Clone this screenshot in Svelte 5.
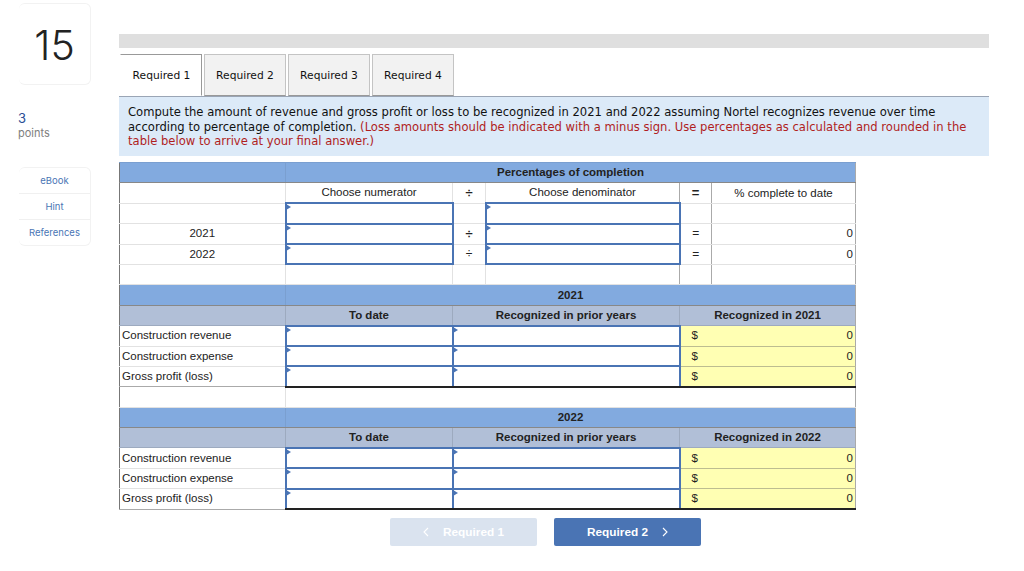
<script>
  const tabs = ['Required 1', 'Required 2', 'Required 3', 'Required 4'];
  const pct = [
    { year: '', a: '', eq: '', val: '', heavy: false },
    { year: '2021', a: '÷', eq: '=', val: '0', heavy: true },
    { year: '2022', a: '÷', eq: '=', val: '0', heavy: false }
  ];
  const rows = ['Construction revenue', 'Construction expense', 'Gross profit (loss)'];
  const years = ['2021', '2022'];
</script>

<div class="page">
  <aside class="side">
    <div class="num">15</div>
    <div class="pts"><span class="three">3</span><span class="lbl">points</span></div>
    <nav class="links">
      <a href="#a">eBook</a>
      <a href="#b">Hint</a>
      <a href="#c">References</a>
    </nav>
  </aside>

  <main class="main">
    <div class="greybar"></div>
    <div class="tabs">
      {#each tabs as t, i}
        <button class="tab" class:active={i === 0}>{t}</button>
      {/each}
    </div>
    <div class="prompt">
      Compute the amount of revenue and gross profit or loss to be recognized in 2021 and 2022 assuming Nortel recognizes revenue over time according to percentage of completion. <span class="red">(Loss amounts should be indicated with a minus sign. Use percentages as calculated and rounded in the table below to arrive at your final answer.)</span>
    </div>

    <table>
      <colgroup>
        <col class="c1" /><col class="c2" /><col class="c3" /><col class="c4" /><col class="c5" /><col class="c6" />
      </colgroup>
      <tbody>
        <tr class="blue"><td></td><td colspan="5" class="title">Percentages of completion</td></tr>
        <tr class="choose">
          <td></td><td class="ctr">Choose numerator</td><td class="ctr op heavy">÷</td><td class="ctr">Choose denominator</td><td class="ctr op v heavy">=</td><td class="ctr v">% complete to date</td>
        </tr>
        {#each pct as p}
          <tr class="data">
            <td class="ctr">{p.year}</td>
            <td class="inp"></td>
            <td class="ctr op" class:heavy={p.heavy}>{p.a}</td>
            <td class="inp"></td>
            <td class="ctr op v">{p.eq}</td>
            <td class="num-cell v">{p.val}</td>
          </tr>
        {/each}
        <tr class="spacer"><td></td><td></td><td></td><td></td><td class="v"></td><td class="v"></td></tr>

        {#each years as y, yi}
          <tr class="blue"><td></td><td colspan="5" class="title">{y}</td></tr>
          <tr class="grey">
            <td></td>
            <td>To date</td>
            <td colspan="2">Recognized in prior years</td>
            <td colspan="2">Recognized in {y}</td>
          </tr>
          {#each rows as r, ri}
            <tr class="data" class:total={ri === 2}>
              <td class="label">{r}</td>
              <td class="inp"></td>
              <td class="inp" colspan="2"></td>
              <td class="yellow" colspan="2"><div class="money"><span>$</span><span>0</span></div></td>
            </tr>
          {/each}
          {#if yi === 0}
            <tr class="spacer"><td></td><td colspan="5"></td></tr>
          {/if}
        {/each}
      </tbody>
    </table>

    <div class="nav">
      <button class="navbtn off">
        <svg class="chev" viewBox="0 0 6 10" aria-hidden="true"><path d="M5 1 1 5l4 4" /></svg>Required 1
      </button>
      <button class="navbtn on">
        Required 2<svg class="chev next" viewBox="0 0 6 10" aria-hidden="true"><path d="m1 1 4 4-4 4" /></svg>
      </button>
    </div>
  </main>
</div>

<style>
  :global(body) {
    margin: 0;
    background: #fff;
  }
  .page {
    display: flex;
    width: 1024px;
    height: 571px;
    overflow: hidden;
    box-sizing: border-box;
    padding: 3px 0 0 19px;
  }
  .side {
    width: 100px;
    flex: none;
    font-family: Inter, "Open Sans", sans-serif;
  }
  .num {
    width: 72px;
    height: 82px;
    box-sizing: border-box;
    border: 1px solid #f2f2f2;
    border-left: 0;
    border-radius: 6px;
    font-size: 41px;
    font-weight: 350;
    line-height: 82px;
    text-align: center;
    color: #222;
  }
  .pts {
    margin-top: 24px;
    margin-left: -1px;
    display: flex;
    flex-direction: column;
    height: 58px;
  }
  .three {
    font-size: 13px;
    line-height: 18px;
    color: #2a4f96;
  }
  .lbl {
    font-size: 11px;
    line-height: 12px;
    color: #808080;
  }
  .links {
    width: 72px;
    height: 79px;
    box-sizing: border-box;
    border: 1px solid #f2f2f2;
    border-left: 0;
    border-radius: 6px;
    display: flex;
    flex-direction: column;
  }
  .links a {
    flex: 1;
    display: flex;
    align-items: center;
    justify-content: center;
    font-size: 9.5px;
    color: #4a76b5;
    text-decoration: none;
    border-bottom: 1px solid #f0f0f0;
  }
  .links a:last-child {
    border-bottom: 0;
  }
  .main {
    width: 870px;
    flex: none;
    padding-top: 31px;
  }
  .greybar {
    height: 14px;
    background: #dfdfdf;
  }
  .tabs {
    display: flex;
    gap: 2px;
    margin-top: 6px;
    padding-left: 1px;
    height: 42px;
  }
  .tab {
    width: 82px;
    height: 42px;
    box-sizing: border-box;
    padding: 0;
    font-family: "DejaVu Sans", sans-serif;
    font-size: 10.7px;
    color: #111;
    background: #f2f2f2;
    border: 1px solid #c4c4c4;
    border-bottom-color: #999;
  }
  .tab.active {
    background: #fff;
    padding-left: 1px;
    border-color: #999;
    border-left-color: transparent;
    border-bottom-color: #fff;
  }
  .prompt {
    height: 60px;
    box-sizing: border-box;
    padding: 8px 20px 0 9px;
    background: #dceaf8;
    border-top: 1px solid #9aa5b5;
    font-family: "DejaVu Sans", sans-serif;
    font-size: 11.58px;
    line-height: 14.6px;
    color: #111;
  }
  .red {
    color: #b01e1e;
  }
  table {
    margin-top: 6px;
    width: 736px;
    height: 347px;
    table-layout: fixed;
    border-collapse: collapse;
    font-family: "Liberation Sans", Arial, sans-serif;
    font-size: 11.5px;
    color: #222;
    border-left: 1px solid #777;
    border-right: 1px solid #aaa;
  }
  .c1 { width: 166px; }
  .c2 { width: 167px; }
  .c3 { width: 33px; }
  .c4 { width: 194px; }
  .c5 { width: 32px; }
  .c6 { width: 144px; }
  tr {
    height: 20.4px;
  }
  td {
    padding: 0 0 1px;
    border-top: 1px solid #e2e2e2;
    border-bottom: 1px solid #e2e2e2;
    position: relative;
  }
  td + td {
    border-left: 1px solid #e2e2e2;
  }
  td.v {
    border-left-color: #aaa;
  }
  .ctr {
    text-align: center;
  }
  .op {
    font-size: 12px;
  }
  .op.heavy {
    font-size: 13px;
    font-weight: bold;
  }
  .blue td {
    background: #82aadf;
    border-color: #7a9fd0;
    border-bottom-color: #888;
  }
  .title {
    text-align: center;
    font-weight: bold;
  }
  .grey td {
    background: #b1bfd7;
    border-color: #9daabf;
    text-align: center;
    font-weight: bold;
  }
  .inp {
    background: #fff;
    border: 2px solid #4a74b4 !important;
  }
  .inp::before {
    content: "";
    position: absolute;
    left: -1px;
    top: 0;
    border-left: 5px solid #4a74b4;
    border-top: 3px solid transparent;
    border-bottom: 3px solid transparent;
  }
  .num-cell {
    text-align: right;
    padding-right: 2px;
  }
  .label {
    padding-left: 2px;
  }
  .yellow {
    background: #ffffb3;
    border-color: #bdbd90;
  }
  .money {
    display: flex;
    justify-content: space-between;
    padding: 0 2px 0 11px;
  }
  .total .yellow,
  .total .inp {
    border-bottom: 2px solid #222 !important;
  }
  .total .label {
    border-bottom-color: #aaa;
  }
  .nav {
    display: flex;
    gap: 17px;
    margin: 8px 0 0 271px;
  }
  .navbtn {
    width: 147px;
    height: 28px;
    border: 0;
    padding: 0;
    border-radius: 2px;
    display: flex;
    align-items: center;
    justify-content: center;
    font-family: "Liberation Sans", Arial, sans-serif;
    font-size: 11.8px;
    font-weight: bold;
    color: #fff;
  }
  .off {
    background: #dae3ef;
  }
  .on {
    background: #4a74b4;
  }
  .chev {
    width: 6px;
    height: 10px;
    margin-right: 14px;
  }
  .chev.next {
    margin: 0 0 0 14px;
  }
  .chev path {
    fill: none;
    stroke: #fff;
    stroke-width: 1.1;
  }
</style>
